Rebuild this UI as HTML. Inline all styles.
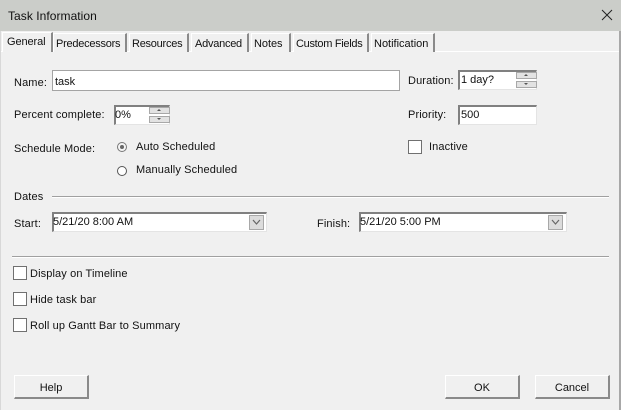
<!DOCTYPE html>
<html><head><meta charset="utf-8"><style>
html,body{margin:0;padding:0;width:621px;height:410px;overflow:hidden;background:#f0f0f0}
body{position:relative;font-family:"Liberation Sans",sans-serif;font-size:11px;color:#111}
.a{position:absolute;box-sizing:border-box}
.t{position:absolute;white-space:nowrap;line-height:14px;font-size:11px;letter-spacing:.12px}
.tab{position:absolute;top:33px;height:19px;box-sizing:border-box;border-top:1px solid #fff;border-left:1px solid #fff;border-right:2px solid #8a8a8a;background:#f0f0f0;line-height:20px;font-size:11px;padding-left:2px;white-space:nowrap;letter-spacing:-.25px}
.inp{position:absolute;box-sizing:border-box;background:#fff;border:1px solid #a4a4a4}
.sunk{position:absolute;box-sizing:border-box;background:#fff;border-top:2px solid #808080;border-left:2px solid #808080;border-right:1px solid #e4e4e4;border-bottom:1px solid #e4e4e4}
.sp{position:absolute;box-sizing:border-box;width:21px;height:7px;background:#e2e2e2;border:1px solid #a8a8a8}
.sp i{position:absolute;left:7px;top:1px;width:0;height:0;border-left:2px solid transparent;border-right:2px solid transparent}
.up i{border-bottom:2px solid #555}.dn i{border-top:2px solid #555}
.cb{position:absolute;box-sizing:border-box;width:14px;height:14px;background:#fff;border:1px solid #707070}
.btn{position:absolute;box-sizing:border-box;width:75px;height:24px;top:375px;background:#f0f0f0;border-top:1px solid #fff;border-left:1px solid #fff;border-right:2px solid #8a8a8a;border-bottom:2px solid #8a8a8a;text-align:center;line-height:24px;font-size:11px}
.dd{position:absolute;box-sizing:border-box;width:15px;height:15px;background:#dcdcdc;border:1px solid #a8a8a8}
.line{position:absolute;height:2px;background:linear-gradient(#a0a0a0 50%,#fff 50%)}
</style></head><body>
<div class="a" style="left:0;top:0;width:621px;height:31px;background:#cbcdc9"></div>
<div class="t" style="left:8px;top:9px;font-size:12px;letter-spacing:.05px;">Task Information</div>
<svg class="a" style="left:601px;top:9px" width="12" height="12"><path d="M1 1L11 11M11 1L1 11" stroke="#222" stroke-width="1" fill="none"/></svg>
<div class="a" style="left:0;top:51px;width:621px;height:1px;background:#fff"></div>
<div class="a" style="left:0;top:31px;width:1px;height:379px;background:#d8d8d8"></div>
<div class="a" style="left:619px;top:31px;width:2px;height:379px;background:#a8a8a8"></div>

<div class="tab" style="left:2px;top:32px;width:51px;height:20px;padding-left:4px;line-height:18px;z-index:2;letter-spacing:-.1px">General</div>
<div class="tab" style="left:53px;width:74px;">Predecessors</div>
<div class="tab" style="left:129px;width:60px;">Resources</div>
<div class="tab" style="left:191px;width:58px;padding-left:3px">Advanced</div>
<div class="tab" style="left:251px;width:40px;letter-spacing:-.05px">Notes</div>
<div class="tab" style="left:293px;width:76px;letter-spacing:-.3px">Custom Fields</div>
<div class="tab" style="left:371px;width:64px;letter-spacing:0">Notification</div>

<div class="t" style="left:14px;top:76px">Name:</div>
<div class="inp" style="left:52px;top:70px;width:348px;height:21px"></div>
<div class="t" style="left:55px;top:75px;letter-spacing:0">task</div>

<div class="t" style="left:408px;top:74px">Duration:</div>
<div class="sunk" style="left:458px;top:70px;width:79px;height:20px"></div>
<div class="t" style="left:461px;top:73px;letter-spacing:0">1 day?</div>
<div class="sp up" style="left:516px;top:72px"><i></i></div>
<div class="sp dn" style="left:516px;top:81px"><i></i></div>

<div class="t" style="left:14px;top:108px">Percent complete:</div>
<div class="sunk" style="left:114px;top:105px;width:56px;height:20px"></div>
<div class="t" style="left:115px;top:108px;letter-spacing:0">0%</div>
<div class="sp up" style="left:149px;top:107px"><i></i></div>
<div class="sp dn" style="left:149px;top:116px"><i></i></div>

<div class="t" style="left:408px;top:108px">Priority:</div>
<div class="sunk" style="left:458px;top:105px;width:79px;height:20px"></div>
<div class="t" style="left:461px;top:108px;letter-spacing:0">500</div>

<div class="t" style="left:14px;top:142px">Schedule Mode:</div>
<svg class="a" style="left:116px;top:141px" width="12" height="36">
<circle cx="6" cy="6" r="4.500" fill="#f4f4f4" stroke="#777"/><circle cx="6" cy="6" r="2" fill="#666"/>
<circle cx="6" cy="30" r="4.500" fill="#fff" stroke="#555"/></svg>
<div class="t" style="left:136px;top:140px">Auto Scheduled</div>
<div class="t" style="left:136px;top:163px">Manually Scheduled</div>

<div class="cb" style="left:408px;top:140px"></div>
<div class="t" style="left:429px;top:140px">Inactive</div>

<div class="t" style="left:14px;top:190px">Dates</div>
<div class="line" style="left:52px;top:196px;width:557px"></div>

<div class="t" style="left:14px;top:217px">Start:</div>
<div class="sunk" style="left:52px;top:212px;width:215px;height:20px"></div>
<div class="t" style="left:53px;top:215px;letter-spacing:0">5/21/20 8:00 AM</div>
<div class="dd" style="left:249px;top:215px"><svg style="position:absolute;left:2px;top:3px" width="9" height="7"><path d="M1 1L4.500 5L8 1" stroke="#666" stroke-width="1.200" fill="none"/></svg></div>

<div class="t" style="left:317px;top:217px">Finish:</div>
<div class="sunk" style="left:359px;top:212px;width:208px;height:20px"></div>
<div class="t" style="left:360px;top:215px;letter-spacing:0">5/21/20 5:00 PM</div>
<div class="dd" style="left:548px;top:215px"><svg style="position:absolute;left:2px;top:3px" width="9" height="7"><path d="M1 1L4.500 5L8 1" stroke="#666" stroke-width="1.200" fill="none"/></svg></div>

<div class="line" style="left:12px;top:256px;width:597px"></div>

<div class="cb" style="left:13px;top:266px"></div>
<div class="t" style="left:30px;top:267px">Display on Timeline</div>
<div class="cb" style="left:13px;top:292px"></div>
<div class="t" style="left:30px;top:293px">Hide task bar</div>
<div class="cb" style="left:13px;top:318px"></div>
<div class="t" style="left:30px;top:319px">Roll up Gantt Bar to Summary</div>

<div class="btn" style="left:14px">Help</div>
<div class="btn" style="left:445px">OK</div>
<div class="btn" style="left:535px">Cancel</div>
</body></html>
